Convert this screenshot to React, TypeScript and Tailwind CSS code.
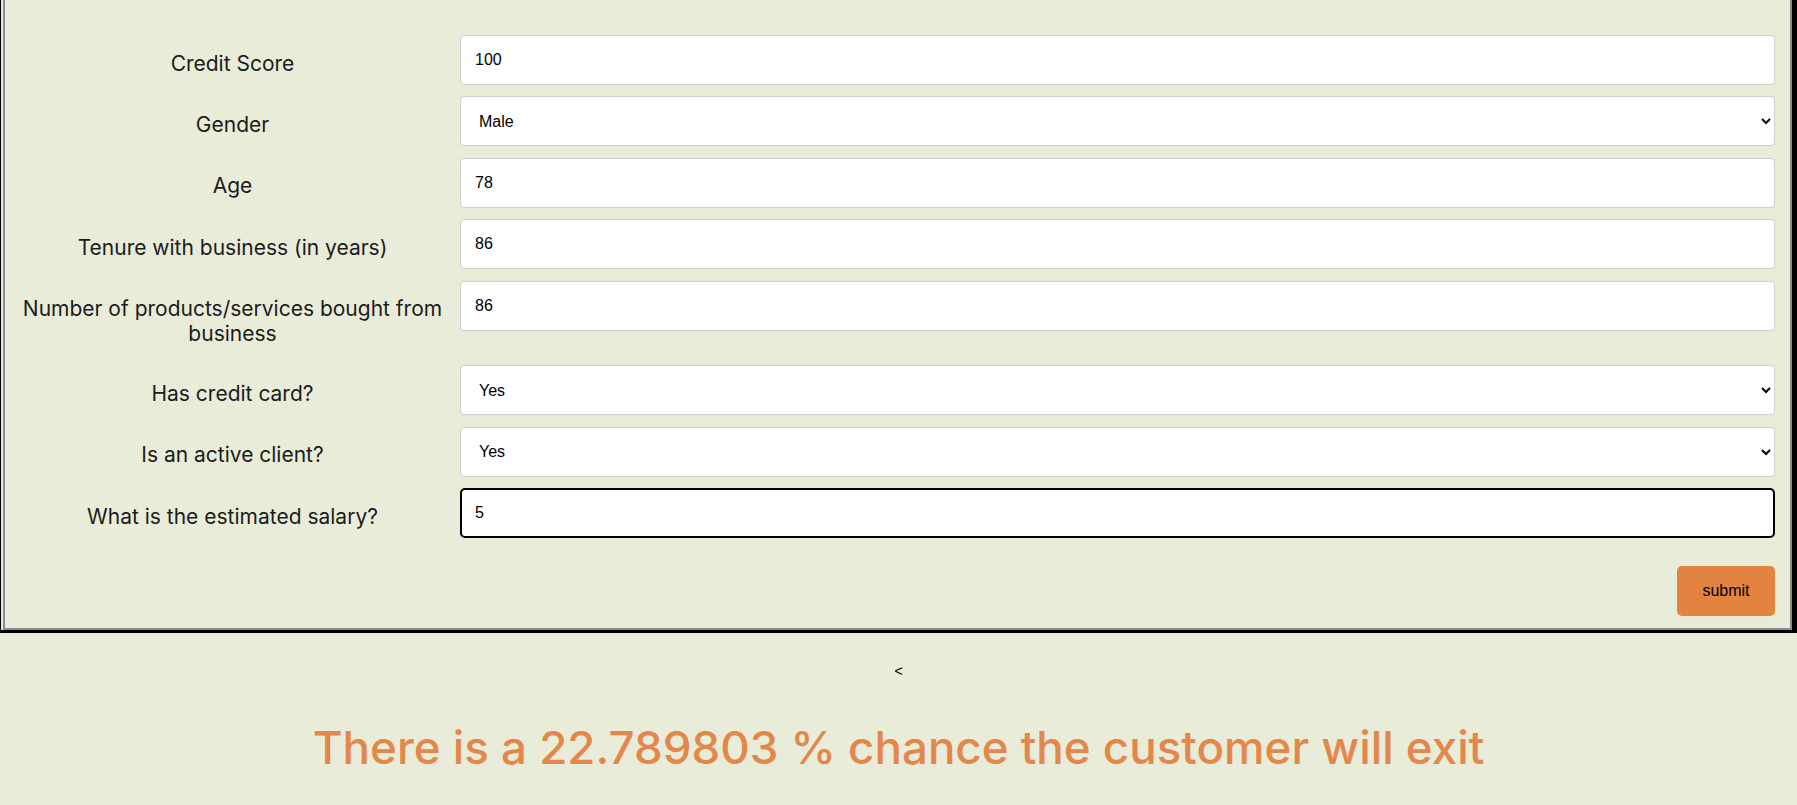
import React from "react"

const fields = [
  { label: "Credit Score", type: "input", value: "100" },
  { label: "Gender", type: "select", value: "Male", options: ["Male", "Female"] },
  { label: "Age", type: "input", value: "78" },
  { label: "Tenure with business (in years)", type: "input", value: "86" },
  { label: "Number of products/services bought from business", type: "input", value: "86" },
  { label: "Has credit card?", type: "select", value: "Yes", options: ["Yes", "No"] },
  { label: "Is an active client?", type: "select", value: "Yes", options: ["Yes", "No"] },
]

export default function App() {
  return (
    <div className="min-h-screen bg-[#e9ecd8] font-['Inter','Open_Sans',sans-serif] text-[#1c1c1c]">
      {/* Form box */}
      <div className="border-l border-r-[5px] border-b-[3px] border-black pl-[2px]">
        <form className="border-l-2 border-r-2 border-b-2 border-[#8c8c8c] pt-[35px] pr-[15px] pb-[12px]">
          {fields.map((f) => (
            <div key={f.label} className="flex items-start mb-[11.4px]">
              <label className="w-[455px] shrink-0 text-center text-[21px] leading-[25px] pt-[15.5px] pb-[8px] px-[8px]">
                {f.label}
              </label>
              {f.type === "input" ? (
                <input
                  type="text"
                  defaultValue={f.value}
                  className="h-[50px] w-full bg-white border border-[#cfcfcf] rounded-[4px] px-[14px] text-[16px] text-black font-['Liberation_Sans',Arial,sans-serif]"
                />
              ) : (
                <select
                  defaultValue={f.value}
                  className="h-[50px] w-full bg-white border border-[#cfcfcf] rounded-[4px] px-[14px] text-[16px] text-black font-['Liberation_Sans',Arial,sans-serif]"
                >
                  {f.options?.map((o) => (
                    <option key={o}>{o}</option>
                  ))}
                </select>
              )}
            </div>
          ))}

          {/* Salary (focused) */}
          <div className="flex items-start mb-[11.4px]">
            <label className="w-[455px] shrink-0 text-center text-[21px] leading-[25px] pt-[15.5px] pb-[8px] px-[8px]">
              What is the estimated salary?
            </label>
            <input
              type="text"
              defaultValue="5"
              autoFocus
              className="h-[50px] w-full bg-white border-2 border-black rounded-[5px] px-[13px] text-[16px] text-black outline-none font-['Liberation_Sans',Arial,sans-serif]"
            />
          </div>

          <div className="flex justify-end mt-[28px]">
            <button
              type="button"
              className="w-[98px] h-[50px] bg-[#e2843f] rounded-[5px] text-[16px] text-black font-['Liberation_Sans',Arial,sans-serif]"
            >
              submit
            </button>
          </div>
        </form>
      </div>

      <div className="mt-[28px] text-center text-[14px] leading-[20px] text-black font-['Liberation_Sans',Arial,sans-serif]">
        &lt;
      </div>

      <h2 className="mt-[40px] text-center text-[45.7px] leading-[54px] font-medium text-[#e3874a]">
        There is a 22.789803 % chance the customer will exit
      </h2>
    </div>
  )
}
